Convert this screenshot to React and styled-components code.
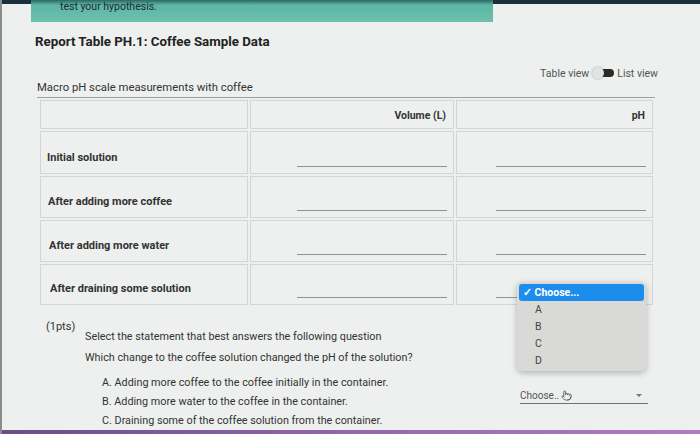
import React from "react";
import styled, { createGlobalStyle } from "styled-components";
import { Pointer } from "lucide-react";

const GlobalStyle = createGlobalStyle`
  * { box-sizing: border-box; }
  html, body { margin: 0; padding: 0; }
  body {
    font-family: "Roboto", "Liberation Sans", sans-serif;
    background: #edf0ee;
    color: #333;
  }
`;

const Page = styled.div`
  position: relative;
  display: flex;
  flex-direction: column;
  width: 700px;
  height: 434px;
  overflow: hidden;
  background: #edf0ee;
  border-left: 2px solid #8a8c8a;
`;

const Banner = styled.div`
  height: 22px;
  flex-shrink: 0;
  background: linear-gradient(#1b2f3b 0 4px, transparent 4px);
  padding-left: 29px;
`;

const TealBlock = styled.div`
  width: 462px;
  height: 22px;
  background: linear-gradient(#2c6763 0, #5db5a4 5px, #6cc2ae 22px);
  padding-left: 29px;
`;

const BannerText = styled.div`
  padding-top: 1px;
  font-size: 10.5px;
  line-height: 11px;
  color: #1c2b33;
`;

const Content = styled.div`
  padding: 0 45px 0 31px;
  display: flex;
  flex-direction: column;
`;

const Title = styled.h1`
  margin: 12px 0 0 2px;
  font-size: 13.3px;
  line-height: 16px;
  font-weight: 700;
  color: #222;
`;

const HeaderRow = styled.div`
  margin: 16px 0 0 4px;
  height: 32px;
  display: flex;
  justify-content: space-between;
  border-bottom: 1px solid #9da09e;
`;

const Caption = styled.div`
  align-self: flex-end;
  padding-bottom: 3px;
  font-size: 11.3px;
  line-height: 12px;
  color: #333;
`;

const ToggleGroup = styled.div`
  display: flex;
  align-items: center;
  gap: 2px;
  height: 14px;
  margin-right: -3px;
  font-size: 10.5px;
  color: #555;
`;

const Toggle = styled.span`
  position: relative;
  display: inline-block;
  width: 24px;
  height: 12px;
`;

const Track = styled.span`
  position: absolute;
  right: 1px;
  top: 2px;
  width: 14px;
  height: 8px;
  border-radius: 4px;
  background: #2a2a2a;
`;

const Knob = styled.span`
  position: absolute;
  left: 1px;
  top: 0;
  width: 12px;
  height: 12px;
  border-radius: 50%;
  background: #e2e4e2;
  box-shadow: 0 0 2px rgba(0, 0, 0, 0.35);
`;

const Table = styled.div`
  margin: 2px 0 0 7px;
  display: grid;
  grid-template-columns: 208px 204px 197px;
  grid-template-rows: 29px 43px 42px 42px 41px;
  gap: 2px;
`;

const Cell = styled.div`
  position: relative;
  border: 1px solid #d3d7d4;
  display: flex;
  align-items: ${(p) => (p.$head ? "center" : "flex-end")};
  justify-content: ${(p) => (p.$right ? "flex-end" : "flex-start")};
  padding: ${(p) => (p.$head ? "0 7px 0 0" : p.$label ? "0 0 9px 6px" : "0 6px 6px 0")};
`;

const HeadText = styled.span`
  font-size: 10.5px;
  font-weight: 700;
  color: #333;
  transform: translateY(1px);
`;

const LabelText = styled.span`
  font-size: 11px;
  line-height: 12px;
  font-weight: 700;
  color: #333;
  padding-left: ${(p) => p.$shift || 0}px;
`;

const InputLine = styled.div`
  width: 150px;
  height: 1px;
  background: #8e918f;
`;

const Menu = styled.div`
  position: absolute;
  left: 60px;
  top: 17px;
  width: 129px;
  z-index: 2;
  padding: 2px;
  border-radius: 5px;
  background: #d9d9d8;
  box-shadow: 0 2px 6px rgba(0, 0, 0, 0.25);
`;

const MenuItem = styled.div`
  height: 17px;
  display: flex;
  align-items: center;
  padding-left: ${(p) => (p.$active ? "4px" : "16px")};
  border-radius: 3px;
  font-size: 10.5px;
  font-weight: ${(p) => (p.$active ? 700 : 400)};
  color: ${(p) => (p.$active ? "#fff" : "#444")};
  background: ${(p) => (p.$active ? "#1d8ded" : "transparent")};
`;

const Question = styled.div`
  margin: 16px 0 0 13px;
  display: flex;
`;

const Points = styled.div`
  width: 39px;
  font-size: 11px;
  line-height: 12px;
  color: #333;
`;

const Body = styled.div`
  padding-top: 10px;
  display: flex;
  flex-direction: column;
`;

const Line = styled.p`
  margin: 0 0 ${(p) => p.$after || 0}px;
  padding-left: ${(p) => (p.$option ? 17 : 0)}px;
  font-size: 10.8px;
  line-height: 12px;
  color: #333;
`;

const Answer = styled.div`
  margin-left: auto;
  margin-right: 7px;
  padding-top: 66px;
`;

const SelectBox = styled.div`
  width: 128px;
  height: 17px;
  display: flex;
  align-items: center;
  gap: 2px;
  border-bottom: 1px solid #6f7270;
  font-size: 10px;
  color: #555;
`;

const Caret = styled.span`
  margin-left: auto;
  margin-right: 6px;
  width: 0;
  height: 0;
  border-left: 3px solid transparent;
  border-right: 3px solid transparent;
  border-top: 3px solid #777;
`;

const Dock = styled.div`
  margin-top: auto;
  height: 4px;
  flex-shrink: 0;
  background: linear-gradient(90deg, #6a4f86, #9b6bb0 60%, #b07cc0);
`;

const rows = [
  { label: "Initial solution", shift: 0 },
  { label: "After adding more coffee", shift: 1 },
  { label: "After adding more water", shift: 2 },
  { label: "After draining some solution", shift: 3 },
];

export default function App() {
  return (
    <Page>
      <GlobalStyle />
      <Banner>
        <TealBlock>
          <BannerText>test your hypothesis.</BannerText>
        </TealBlock>
      </Banner>
      <Content>
        <Title>Report Table PH.1: Coffee Sample Data</Title>
        <HeaderRow>
          <Caption>Macro pH scale measurements with coffee</Caption>
          <ToggleGroup>
            <span>Table view</span>
            <Toggle>
              <Track />
              <Knob />
            </Toggle>
            <span>List view</span>
          </ToggleGroup>
        </HeaderRow>
        <Table>
          <Cell $head />
          <Cell $head $right>
            <HeadText>Volume (L)</HeadText>
          </Cell>
          <Cell $head $right>
            <HeadText>pH</HeadText>
          </Cell>
          {rows.map((row, i) => (
            <React.Fragment key={row.label}>
              <Cell $label>
                <LabelText $shift={row.shift}>{row.label}</LabelText>
              </Cell>
              <Cell $right>
                <InputLine />
              </Cell>
              <Cell $right>
                <InputLine />
                {i === rows.length - 1 && (
                  <Menu>
                    <MenuItem $active>✓ Choose...</MenuItem>
                    {["A", "B", "C", "D"].map((o) => (
                      <MenuItem key={o}>{o}</MenuItem>
                    ))}
                  </Menu>
                )}
              </Cell>
            </React.Fragment>
          ))}
        </Table>
        <Question>
          <Points>(1pts)</Points>
          <Body>
            <Line $after={9}>Select the statement that best answers the following question</Line>
            <Line $after={13}>Which change to the coffee solution changed the pH of the solution?</Line>
            <Line $option $after={7}>A. Adding more coffee to the coffee initially in the container.</Line>
            <Line $option $after={7}>B. Adding more water to the coffee in the container.</Line>
            <Line $option>C. Draining some of the coffee solution from the container.</Line>
          </Body>
          <Answer>
            <SelectBox>
              <span>Choose..</span>
              <Pointer size={11} strokeWidth={1.8} color="#555" />
              <Caret />
            </SelectBox>
          </Answer>
        </Question>
      </Content>
      <Dock />
    </Page>
  );
}
